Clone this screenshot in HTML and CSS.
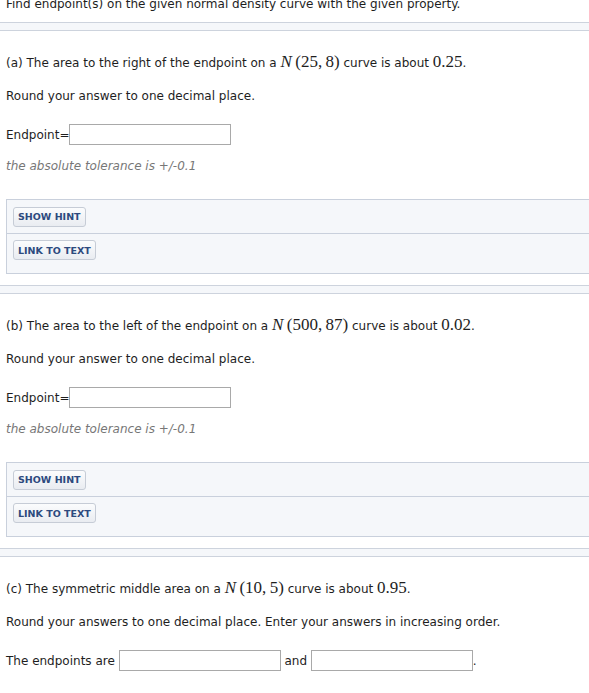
FILE: index.html
```html
<!DOCTYPE html>
<html lang="en">
<head>
  <meta charset="UTF-8" />
  <title>Normal density endpoints</title>
  <link rel="stylesheet" href="styles.css">
</head>
<body>

  <p class="intro">Find endpoint(s) on the given normal density curve with the given property.</p>

  <div class="sep"></div>

  <div class="part">
    <p class="q">(a) The area to the right of the endpoint on a <span class="math"><i>N</i>&thinsp;(25,&thinsp;8)</span> curve is about <span class="math">0.25</span>.</p>
    <p class="q">Round your answer to one decimal place.</p>
    <div class="answer">Endpoint=<input type="text" class="field" /></div>
    <p class="tol">the absolute tolerance is +/-0.1</p>
    <div class="hints">
      <div class="hint-row"><button class="hbtn">Show Hint</button></div>
      <div class="hint-row last"><button class="hbtn">Link to Text</button></div>
    </div>
  </div>

  <div class="sep"></div>

  <div class="part">
    <p class="q">(b) The area to the left of the endpoint on a <span class="math"><i>N</i>&thinsp;(500,&thinsp;87)</span> curve is about <span class="math">0.02</span>.</p>
    <p class="q">Round your answer to one decimal place.</p>
    <div class="answer">Endpoint=<input type="text" class="field" /></div>
    <p class="tol">the absolute tolerance is +/-0.1</p>
    <div class="hints">
      <div class="hint-row"><button class="hbtn">Show Hint</button></div>
      <div class="hint-row last"><button class="hbtn">Link to Text</button></div>
    </div>
  </div>

  <div class="sep"></div>

  <div class="part">
    <p class="q">(c) The symmetric middle area on a <span class="math"><i>N</i>&thinsp;(10,&thinsp;5)</span> curve is about <span class="math">0.95</span>.</p>
    <p class="q">Round your answers to one decimal place. Enter your answers in increasing order.</p>
    <div class="answer">The endpoints are <input type="text" class="field" /> and <input type="text" class="field" />.</div>
  </div>

</body>
</html>
```

FILE: styles.css
```css
* {
  box-sizing: border-box;
}
html, body {
  overflow: hidden;
}
body {
  margin: 0;
  font-family: "DejaVu Sans", Verdana, sans-serif;
  font-size: 12px;
  line-height: 20px;
  color: #1e1e1e;
  background: white;
}

.intro {
  margin: -6px 0 0;
  padding-left: 6px;
  white-space: nowrap;
}

.sep {
  height: 9px;
  margin-top: 8px;
  background: #f5f7fa;
  border-top: 1px solid #cdd3dd;
  border-bottom: 1px solid #cdd3dd;
}

.part {
  padding: 21px 0 3px 6px;
}

.q {
  margin: 0 0 13px;
}

.math {
  font-family: "Liberation Serif", "Times New Roman", serif;
  font-size: 17px;
  line-height: 20px;
}

.answer {
  margin-top: 18px;
  display: flex;
  align-items: center;
  white-space: pre;
}
.field {
  width: 162px;
  height: 21px;
  border: 1px solid #a9a9a9;
  padding: 0;
  margin: 0;
  font: inherit;
}

.tol {
  margin: 11px 0 0;
  font-style: italic;
  color: #777;
}

.hints {
  margin-top: 23px;
  background: #f5f7fa;
  border: 1px solid #c9d0dc;
  border-right: 0;
}
.hint-row {
  padding: 6px;
  border-bottom: 1px solid #c9d0dc;
}
.hint-row.last {
  border-bottom: 0;
  padding-bottom: 13px;
}
.hbtn {
  height: 20px;
  padding: 0 4px;
  font-family: "DejaVu Sans", Verdana, sans-serif;
  font-size: 9.5px;
  font-weight: bold;
  text-transform: uppercase;
  color: #2d4a7e;
  background: linear-gradient(#fbfcfd, #e9ecf1);
  border: 1px solid #c6ccd6;
  border-radius: 3px;
}
```
